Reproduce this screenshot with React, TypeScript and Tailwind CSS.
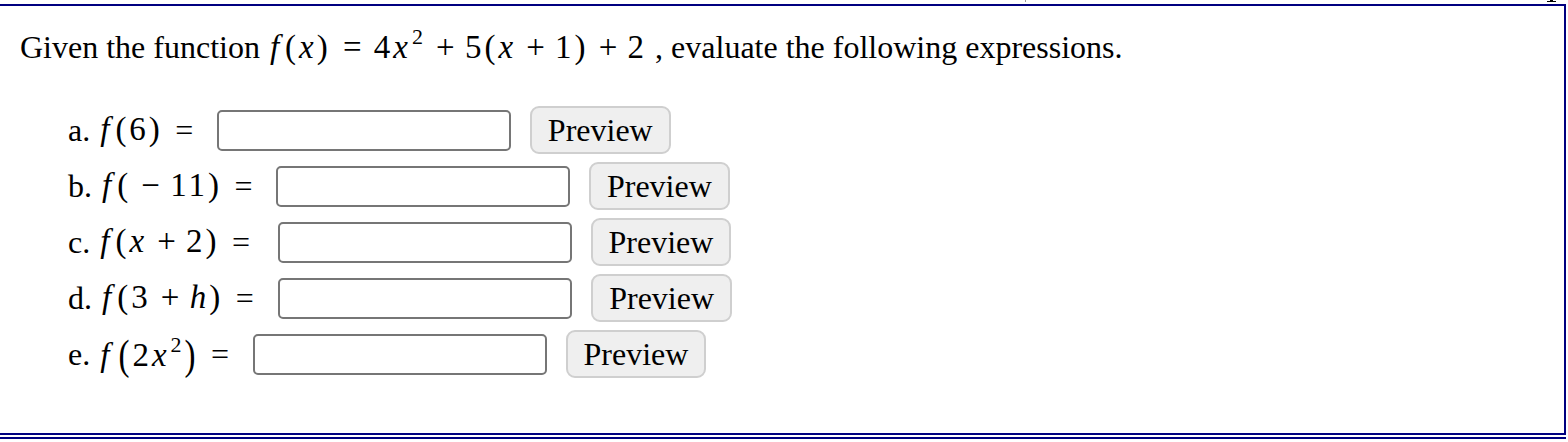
import type { ReactNode } from 'react';

const navy = 'border-[#000080]';

function F() {
  return <i className="italic ml-[2px] mr-[3px]">f</i>;
}

function V({ children }: { children: ReactNode }) {
  return <i className="italic">{children}</i>;
}

function Rel({ children }: { children: ReactNode }) {
  return <span className="inline-block w-[25px] mx-[9px] text-center tracking-normal">{children}</span>;
}

function Bin({ children }: { children: ReactNode }) {
  return <span className="inline-block w-[25px] mx-[7px] text-center tracking-normal">{children}</span>;
}

function Sq() {
  return <span className="text-[22px] align-[14px] ml-[1px]">2</span>;
}

function M({ children }: { children: ReactNode }) {
  return <span className="text-[33px] tracking-[3px]">{children}</span>;
}

type Row = { label: string; math: ReactNode; gap: string };

const rows: Row[] = [
  { label: 'a.', math: <><F />(6)</>, gap: 'ml-[11px]' },
  { label: 'b.', math: <><F />(<Bin>−</Bin>11)</>, gap: 'ml-[11px]' },
  { label: 'c.', math: <><F />(<V>x</V><Bin>+</Bin>2)</>, gap: 'ml-[15px]' },
  { label: 'd.', math: <><F />(3<Bin>+</Bin><V>h</V>)</>, gap: 'ml-[12px]' },
  {
    label: 'e.',
    math: (
      <>
        <F />
        <span className="inline-block scale-y-[1.25] ml-[3px]">(</span>2<V>x</V><Sq />
        <span className="inline-block scale-y-[1.25]">)</span>
      </>
    ),
    gap: 'ml-[11px]',
  },
];

export default function App() {
  return (
    <div className="w-[1568px] h-[442px] overflow-hidden bg-white text-black font-['Liberation_Serif','Times_New_Roman',serif] text-[32px]">
      {/* clipped bits of the page above */}
      <div className="h-[4px] flex">
        <div className="ml-[1025px] w-[1px] h-[2px] bg-[#9a9a9a]" />
        <div className="ml-[521px] w-[9px] h-[2px] flex flex-col items-center">
          <div className="w-[3px] h-[1px] bg-black" />
          <div className="w-[9px] h-[1px] bg-black" />
        </div>
      </div>

      <div className={`w-[1566px] h-[431px] border-t-2 border-r-2 border-b-2 ${navy}`}>
        <p className="pl-[20px] pt-[12px] leading-[37px] whitespace-nowrap">
          Given the function{' '}
          <M>
            <F />(<V>x</V>)<Rel>=</Rel>4<V>x</V><Sq /><Bin>+</Bin>5(<V>x</V><Bin>+</Bin>1)<Bin>+</Bin>2
          </M>{' '}
          , evaluate the following expressions.
        </p>

        <div className="pl-[68px] mt-[36px] flex flex-col">
          {rows.map(row => (
            <div key={row.label} className="h-[56px] flex items-center whitespace-nowrap">
              <span>{row.label}&nbsp;</span>
              <M>{row.math}</M>
              <Rel>=</Rel>
              <input
                type="text"
                className={`${row.gap} w-[294px] h-[41px] border-2 border-[#767676] rounded-[5px] bg-white`}
              />
              <button
                type="button"
                className="ml-[19px] h-[48px] px-[16px] border-2 border-[#cfcfcf] rounded-[9px] bg-[#efefef] text-[32px] leading-none"
              >
                Preview
              </button>
            </div>
          ))}
        </div>
      </div>

      <div className="mt-[2px] w-[1566px] h-[2px] bg-[#000080]" />
    </div>
  );
}
